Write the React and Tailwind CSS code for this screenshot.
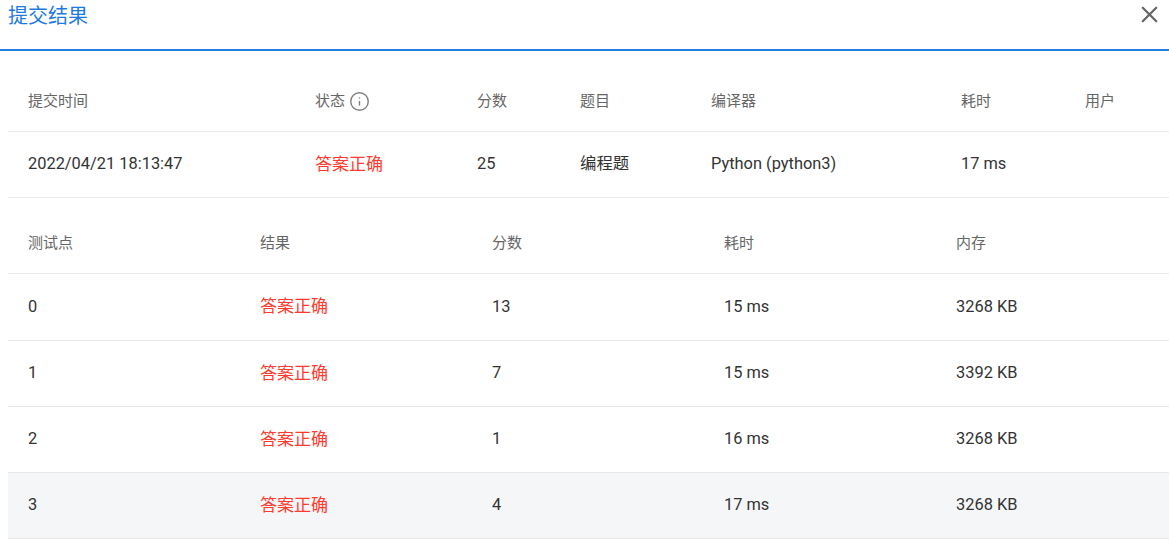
import { X, Info } from "lucide-react";

const summaryCols = [
  { label: "提交时间", w: "w-[287px]" },
  { label: "状态", w: "w-[162px]", icon: true },
  { label: "分数", w: "w-[103px]" },
  { label: "题目", w: "w-[131px]" },
  { label: "编译器", w: "w-[250px]" },
  { label: "耗时", w: "w-[124px]" },
  { label: "用户", w: "flex-1" },
];

const summary = ["2022/04/21 18:13:47", "答案正确", "25", "编程题", "Python (python3)", "17 ms", ""];

const cases = [
  ["0", "答案正确", "13", "15 ms", "3268 KB"],
  ["1", "答案正确", "7", "15 ms", "3392 KB"],
  ["2", "答案正确", "1", "16 ms", "3268 KB"],
  ["3", "答案正确", "4", "17 ms", "3268 KB"],
];

const Cell = ({ value, className }) => (
  <div className={`${className} pl-5 ${value === "答案正确" ? "text-[#ff3b30] text-[17px]" : "text-[#333] text-[16.4px]"}`}>
    {value}
  </div>
);

export default function App() {
  return (
    <div className="w-[1169px] h-[547px] bg-white font-['Roboto','Noto_Sans_CJK_SC',sans-serif] overflow-hidden">
      <div className="h-[51px] flex items-start justify-between border-b-2 border-[#1f7fe3]">
        <h2 className="pl-2 pt-[3px] text-[20px] leading-[26px] text-[#1f7ae0]">提交结果</h2>
        <button className="mr-[6px] mt-[1px] text-[#666]">
          <X size={27} strokeWidth={2} />
        </button>
      </div>

      <div className="pl-2 pt-[20px]">
        <div className="flex items-center h-[61px] border-b border-[#ebebeb] text-[15px] text-[#666]">
          {summaryCols.map((c) => (
            <div key={c.label} className={`${c.w} pl-5 flex items-center gap-[4px]`}>
              {c.label}
              {c.icon && <Info size={21} strokeWidth={1.6} className="text-[#808080]" />}
            </div>
          ))}
        </div>
        <div className="flex items-center h-[66px] border-b border-[#ebebeb]">
          {summary.map((v, i) => (
            <Cell key={i} value={v} className={summaryCols[i].w} />
          ))}
        </div>

        <div className="grid grid-cols-[232px_232px_232px_232px_232px] items-center h-[76px] border-b border-[#ebebeb] text-[15px] text-[#666]">
          {["测试点", "结果", "分数", "耗时", "内存"].map((h) => (
            <div key={h} className="pl-5 pt-[16px]">{h}</div>
          ))}
        </div>
        {cases.map((row, r) => (
          <div
            key={r}
            className={`grid grid-cols-[232px_232px_232px_232px_232px] items-center border-b border-[#e6e6e6] ${r === 0 ? "h-[67px]" : "h-[66px]"} ${r === 3 ? "bg-[#f5f6f8]" : ""}`}
          >
            {row.map((v, i) => (
              <Cell key={i} value={v} className="" />
            ))}
          </div>
        ))}
      </div>
    </div>
  );
}
